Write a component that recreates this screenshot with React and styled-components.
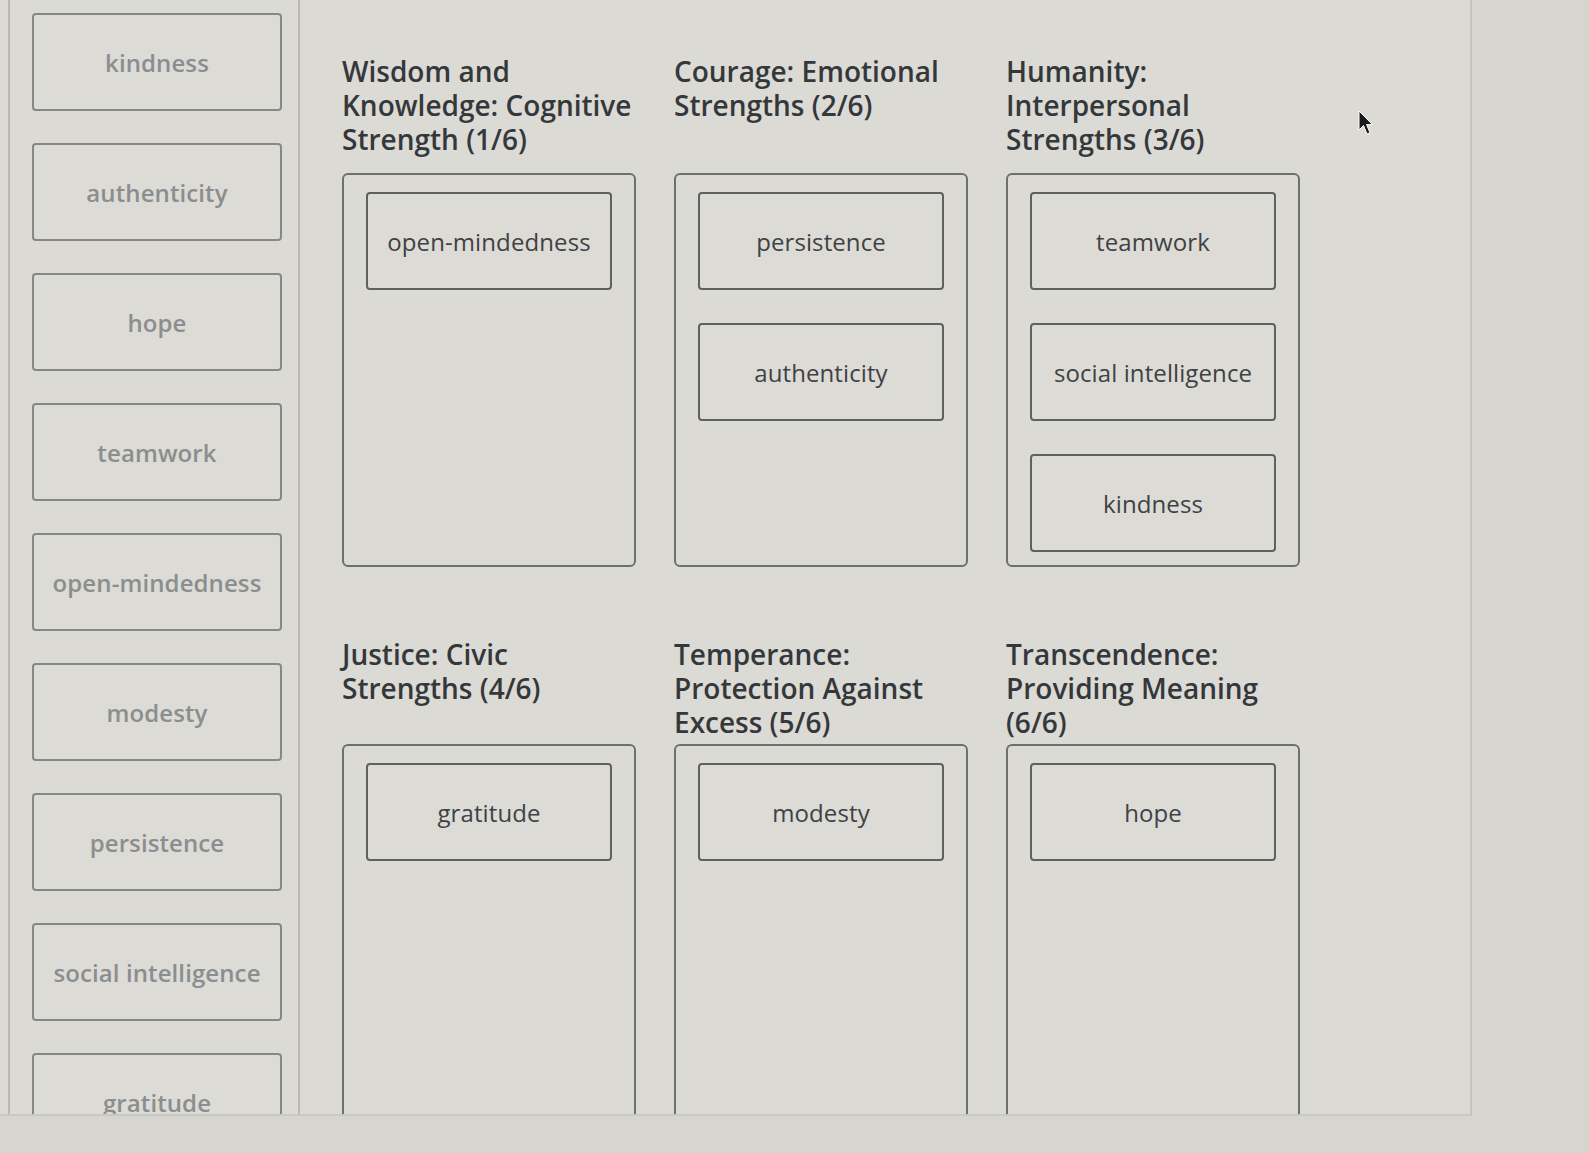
import React from 'react';
import styled, { createGlobalStyle } from 'styled-components';

const GlobalStyle = createGlobalStyle`
  body {
    margin: 0;
    background: #d6d5d0;
    font-family: "Open Sans", "Noto Sans", "Liberation Sans", sans-serif;
  }
`;

const Page = styled.div`
  position: relative;
  display: flex;
  width: 1470px;
  height: 1114px;
  overflow: hidden;
  background: #dbdad5;
  border-right: 2px solid #c4c3be;
  border-bottom: 2px solid #c9c8c3;
`;

const Bank = styled.div`
  flex: none;
  display: flex;
  flex-direction: column;
  gap: 32px;
  width: 292px;
  margin-left: 8px;
  padding: 13px 0 0 22px;
  box-sizing: border-box;
  border-left: 2px solid #b9b9b5;
  border-right: 2px solid #b9b9b5;
`;

const Chip = styled.div`
  flex: none;
  display: flex;
  align-items: center;
  justify-content: center;
  width: ${p => (p.placed ? '246px' : '250px')};
  height: 98px;
  box-sizing: border-box;
  border: 2px solid ${p => (p.placed ? '#5e6162' : '#858889')};
  border-radius: 4px;
  background: #dcdbd6;
  font-size: 24px;
  letter-spacing: 0.1px;
  font-weight: ${p => (p.placed ? 400 : 600)};
  color: ${p => (p.placed ? '#3f4244' : '#8b8e8f')};
`;

const Board = styled.div`
  display: grid;
  grid-template-columns: repeat(3, 294px);
  column-gap: 38px;
  row-gap: 70px;
  padding: 54px 0 0 42px;
  align-content: start;
`;

const Category = styled.div`
  display: flex;
  flex-direction: column;
`;

const Heading = styled.h2`
  margin: 0;
  height: ${p => (p.short ? '107px' : '119px')};
  font-size: 28px;
  line-height: 34px;
  font-weight: 600;
  color: #34383b;
`;

const Zone = styled.div`
  display: flex;
  flex-direction: column;
  gap: 33px;
  height: 394px;
  padding: 17px 22px;
  box-sizing: border-box;
  border: 2px solid #6d7071;
  border-radius: 6px;
`;

const Cursor = styled.svg`
  position: absolute;
  left: 1358px;
  top: 110px;
`;

const bank = [
  'kindness',
  'authenticity',
  'hope',
  'teamwork',
  'open-mindedness',
  'modesty',
  'persistence',
  'social intelligence',
  'gratitude',
];

const categories = [
  { title: 'Wisdom and Knowledge: Cognitive Strength (1/6)', items: ['open-mindedness'] },
  { title: 'Courage: Emotional Strengths (2/6)', items: ['persistence', 'authenticity'] },
  { title: 'Humanity: Interpersonal Strengths (3/6)', items: ['teamwork', 'social intelligence', 'kindness'] },
  { title: 'Justice: Civic Strengths (4/6)', items: ['gratitude'], short: true },
  { title: 'Temperance: Protection Against Excess (5/6)', items: ['modesty'], short: true },
  { title: 'Transcendence: Providing Meaning (6/6)', items: ['hope'], short: true },
];

export default function App() {
  return (
    <>
      <GlobalStyle />
      <Page>
        <Bank>
          {bank.map(word => (
            <Chip key={word}>{word}</Chip>
          ))}
        </Bank>
        <Board>
          {categories.map(cat => (
            <Category key={cat.title}>
              <Heading short={cat.short}>{cat.title}</Heading>
              <Zone>
                {cat.items.map(word => (
                  <Chip placed key={word}>{word}</Chip>
                ))}
              </Zone>
            </Category>
          ))}
        </Board>
        <Cursor width="16" height="26" viewBox="0 0 16 26">
          <path d="M1 1 L1 20 L5.5 15.5 L9 24 L12 22.8 L8.6 14.6 L14.5 14.6 Z" fill="#1a1a1a" stroke="#ffffff" strokeWidth="1" />
        </Cursor>
      </Page>
    </>
  );
}
